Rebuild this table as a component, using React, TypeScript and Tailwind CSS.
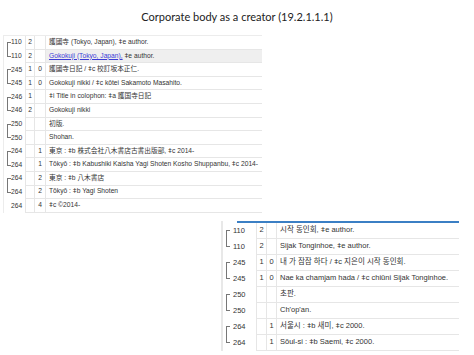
import React from "react";

type Row = {
  tag: string;
  i1?: string;
  i2?: string;
  text: React.ReactNode;
  br?: "top" | "bottom";
  hl?: boolean;
};

const JP = "font-['Liberation_Sans','Noto_Sans_CJK_JP',sans-serif]";
const KR = "font-['Liberation_Sans','Noto_Sans_CJK_KR',sans-serif]";

const rowsJp: Row[] = [
  { tag: "110", i1: "2", text: "護國寺 (Tokyo, Japan), ǂe author.", br: "top" },
  {
    tag: "110",
    i1: "2",
    text: (
      <>
        <span className="text-[#3b3bd6] underline">Gokokuji (Tokyo, Japan),</span>&nbsp;ǂe author.
      </>
    ),
    br: "bottom",
    hl: true,
  },
  { tag: "245", i1: "1", i2: "0", text: "護國寺日記 / ǂc 校訂坂本正仁.", br: "top" },
  { tag: "245", i1: "1", i2: "0", text: "Gokokuji nikki / ǂc kōtei Sakamoto Masahito.", br: "bottom" },
  { tag: "246", i1: "1", text: "ǂi Title in colophon: ǂa 護国寺日記", br: "top" },
  { tag: "246", i1: "2", text: "Gokokuji nikki", br: "bottom" },
  { tag: "250", text: "初版.", br: "top" },
  { tag: "250", text: "Shohan.", br: "bottom" },
  { tag: "264", i2: "1", text: "東京 : ǂb 株式会社八木書店古書出版部, ǂc 2014-", br: "top" },
  { tag: "264", i2: "1", text: "Tōkyō : ǂb Kabushiki Kaisha Yagi Shoten Kosho Shuppanbu, ǂc 2014-", br: "bottom" },
  { tag: "264", i2: "2", text: "東京 : ǂb 八木書店", br: "top" },
  { tag: "264", i2: "2", text: "Tōkyō : ǂb Yagi Shoten", br: "bottom" },
  { tag: "264", i2: "4", text: "ǂc ©2014-" },
];

const rowsKr: Row[] = [
  { tag: "110", i1: "2", text: "시작 동인회, ǂe author.", br: "top" },
  { tag: "110", i1: "2", text: "Sijak Tonginhoe, ǂe author.", br: "bottom" },
  { tag: "245", i1: "1", i2: "0", text: "내 가 잠잠 하다 / ǂc 지은이 시작 동인회.", br: "top" },
  { tag: "245", i1: "1", i2: "0", text: "Nae ka chamjam hada / ǂc chiŭni Sijak Tonginhoe.", br: "bottom" },
  { tag: "250", text: "초판.", br: "top" },
  { tag: "250", text: "Ch'op'an.", br: "bottom" },
  { tag: "264", i2: "1", text: "서울시 : ǂb 새미, ǂc 2000.", br: "top" },
  { tag: "264", i2: "1", text: "Sŏul-si : ǂb Saemi, ǂc 2000.", br: "bottom" },
];

function Bracket({ br }: { br?: "top" | "bottom" }) {
  return (
    <div className="flex h-full w-[4px] shrink-0 flex-col">
      <div className={`flex-1 ${br === "bottom" ? "border-b border-l border-[#777]" : ""}`} />
      <div className={`flex-1 ${br === "top" ? "border-l border-t border-[#777]" : ""}`} />
    </div>
  );
}

function SmallRow({ r }: { r: Row }) {
  return (
    <div className="flex h-[13.6px] items-stretch text-[6.7px] leading-none text-[#333]">
      <div className="flex w-[21px] shrink-0 items-center pl-[3px]">
        <Bracket br={r.br} />
        <span>{r.tag}</span>
      </div>
      <div className="flex w-[9px] shrink-0 items-center justify-center border-b border-l border-[#e6e6e6]">{r.i1}</div>
      <div className="flex w-[11px] shrink-0 items-center justify-center border-b border-l border-[#e6e6e6]">{r.i2}</div>
      <div
        className={`flex min-w-0 flex-1 items-center overflow-hidden whitespace-nowrap border-b border-l border-[#e6e6e6] pl-[3px] ${
          r.hl ? "bg-[#efefef]" : ""
        }`}
      >
        {r.text}
      </div>
    </div>
  );
}

function BigRow({ r }: { r: Row }) {
  return (
    <div className="flex h-[16px] items-stretch text-[7.5px] leading-none text-[#333]">
      <div className="flex w-[33px] shrink-0 items-center pl-[3px]">
        <Bracket br={r.br} />
        <span className="pl-[3px]">{r.tag}</span>
      </div>
      <div className="flex w-[10px] shrink-0 items-center justify-center border-b border-l border-[#e6e6e6]">{r.i1}</div>
      <div className="flex w-[10px] shrink-0 items-center justify-center border-b border-l border-[#e6e6e6]">{r.i2}</div>
      <div className="flex min-w-0 flex-1 items-center overflow-hidden whitespace-nowrap border-b border-l border-[#e6e6e6] pl-[3px]">
        {r.text}
      </div>
    </div>
  );
}

export default function App() {
  return (
    <div className="flex h-[355px] w-[474px] flex-col overflow-hidden bg-white">
      <div className="flex h-[35px] items-center justify-center pb-[1px] font-['Lato',sans-serif] text-[11px] text-[#222]">
        Corporate body as a creator (19.2.1.1.1)
      </div>

      <div className={`ml-[3px] w-[259px] border-l border-t border-[#ececec] ${JP}`}>
        {rowsJp.map((r, i) => (
          <SmallRow key={i} r={r} />
        ))}
      </div>

      <div className={`ml-[221px] mt-[8px] w-[238px] border-l-[2px] border-[#e8e8e8] ${KR}`}>
        <div className="ml-[14px] h-[2px] bg-[#3b7fc4]" />
        {rowsKr.map((r, i) => (
          <BigRow key={i} r={r} />
        ))}
      </div>
    </div>
  );
}
